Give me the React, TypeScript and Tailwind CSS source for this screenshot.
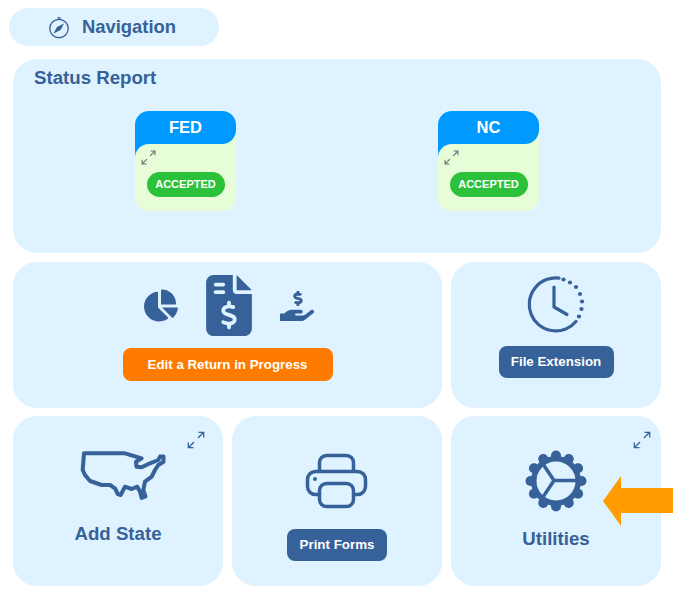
import type { JSX } from "react";
import { FaHandHoldingUsd } from "react-icons/fa";
import { FaChartPie, FaFileInvoiceDollar } from "react-icons/fa6";

const Expand = ({ className }: { className: string }) => (
  <svg viewBox="0 0 14 14" fill="none" stroke="currentColor" strokeWidth="1" className={className}>
    <path d="M8.5 5.5L13 1M9 1H13V5M5.5 8.5L1 13M1 9V13H5" />
  </svg>
);

const CompassIcon = () => (
  <svg viewBox="0 0 22 23" className="w-[22px] h-[23px]" fill="none" stroke="#366299" strokeWidth="1.3">
    <circle cx="11" cy="12.5" r="9.2" />
    <path d="M9.5 2H12.5" strokeWidth="1.6" />
    <path d="M16 7.5L12.6 14L5.5 17.5L9 11Z" fill="#366299" stroke="none" />
  </svg>
);

const ClockIcon = () => (
  <svg viewBox="0 0 60 60" className="w-[60px] h-[60px]" fill="none" stroke="#366299">
    <path d="M33 4.1A26.5 26.5 0 1 0 50 47.5" strokeWidth="3.2" strokeLinecap="round" />
    <path d="M28 13V33L41 40.5" strokeWidth="3.2" strokeLinecap="round" strokeLinejoin="round" />
    <g fill="#366299" stroke="none">
      <circle cx="37.5" cy="5.5" r="2.1" />
      <circle cx="44" cy="8.5" r="2.1" />
      <circle cx="50" cy="13" r="2.1" />
      <circle cx="54" cy="20" r="2.1" />
      <circle cx="56" cy="27.5" r="2.1" />
      <circle cx="55.5" cy="35" r="2.1" />
      <circle cx="53" cy="42.5" r="2.1" />
    </g>
  </svg>
);

const MapIcon = () => (
  <svg viewBox="0 0 88 54" className="w-[88px] h-[54px]" fill="none" stroke="#366299" strokeWidth="4" strokeLinejoin="round" strokeLinecap="round">
    <path d="M4 3.3H45L61.7 8.3L56 11.7L56.5 16.7L61.7 17.3L70 13.3L78.3 10L80 6.5L83.5 6.5L83.5 11.7L78.3 15L75 20L71.7 26.7L65 31.7L63.3 40L65.5 46.5L61.7 48L60 41.7L57.3 36.7L51.7 39L45 36.7L40.7 45L37.8 44L35 38.3L30 35L21.7 35L10 31L5 25L2.7 20Z" />
  </svg>
);

const PrinterIcon = () => (
  <svg viewBox="0 0 64 56" className="w-[64px] h-[56px]" fill="none" stroke="#366299" strokeWidth="3.5">
    <path d="M14.5 18.5V9.5A7 7 0 0 1 21.5 2.5H41.5A7 7 0 0 1 48.5 9.5V18.5" />
    <rect x="2.5" y="18.5" width="58" height="23" rx="8" />
    <rect x="14.5" y="30.5" width="34" height="23" rx="7" fill="#dff2ff" />
    <circle cx="10" cy="26" r="2" fill="#366299" stroke="none" />
  </svg>
);

const GearIcon = () => (
  <svg viewBox="0 0 62 62" className="w-[62px] h-[62px]">
    <g fill="#366299">
      {Array.from({ length: 12 }).map((_, i) => (
        <circle
          key={i}
          cx={31 + 25.5 * Math.cos((i * Math.PI) / 6)}
          cy={31 + 25.5 * Math.sin((i * Math.PI) / 6)}
          r="5"
        />
      ))}
    </g>
    <circle cx="31" cy="31" r="22.25" fill="none" stroke="#366299" strokeWidth="5.5" />
    <path d="M53 30.5H29L18 14M29 30.5L18 47" fill="none" stroke="#366299" strokeWidth="3.5" />
  </svg>
);

const ArrowIcon = () => (
  <svg viewBox="0 0 70 50" className="w-[70px] h-[50px]">
    <path d="M0 25L18 0V12H70V37H18V50Z" fill="#ff9d00" />
  </svg>
);

const ActionButton = ({ label, className }: { label: string; className: string }) => (
  <div className={`flex items-center justify-center text-white text-[13.33px] font-bold ${className}`}>
    {label}
  </div>
);

const StatusChip = ({ label }: { label: string }) => (
  <div className="relative w-[101px] h-[100px] rounded-[14px] overflow-hidden bg-[#e6fdd8] flex flex-col">
    <div className="h-[33px] bg-[#0099ff] rounded-br-[14px] flex items-center justify-center text-white text-[16.5px] font-bold">
      {label}
    </div>
    <div className="flex-1 bg-[linear-gradient(#0099ff_20px,#e6fdd8_20px)]">
      <div className="h-full bg-[#e6fdd8] rounded-tl-[14px] flex justify-center pt-[28px]">
        <div className="w-[78px] h-[25px] rounded-full bg-[#2cc13a] flex items-center justify-center text-white text-[11px] font-bold">
          ACCEPTED
        </div>
      </div>
    </div>
    <Expand className="absolute left-[6px] top-[39px] w-[15px] h-[15px] text-[#666f78]" />
  </div>
);

const BottomCard = ({ children }: { children: JSX.Element | JSX.Element[] }) => (
  <div className="relative h-[170px] rounded-[24px] bg-[#dff2ff] flex flex-col items-center">
    {children}
  </div>
);

const App = () => {
  return (
    <div className="w-[676px] h-[598px] bg-white pt-2 overflow-hidden font-['Liberation_Sans',sans-serif] text-[#366299]">
      <div className="ml-[9px] w-[210px] h-[38px] rounded-full bg-[#dff2ff] flex items-center pl-[39px] gap-[12px]">
        <CompassIcon />
        <span className="text-[18.4px] font-bold">Navigation</span>
      </div>

      <div className="ml-[13px] w-[648px] mt-[13px]">
        {/* Status Report */}
        <div className="h-[194px] rounded-[24px] bg-[#dff2ff] pt-2">
          <h2 className="pl-[21px] text-[18.67px] leading-[22px] font-bold">Status Report</h2>
          <div className="mt-[22px] flex justify-center gap-[202px]">
            <StatusChip label="FED" />
            <StatusChip label="NC" />
          </div>
        </div>

        {/* Returns and extension */}
        <div className="mt-[9px] grid grid-cols-[429px_210px] gap-[9px]">
          <div className="h-[146px] rounded-[24px] bg-[#dff2ff] pt-[13px] flex flex-col items-center">
            <div className="h-[61px] flex items-center gap-[28px] text-[#366299]">
              <FaChartPie className="w-[36px] h-[33px]" />
              <FaFileInvoiceDollar className="w-[46px] h-[61px]" />
              <FaHandHoldingUsd className="w-[34px] h-[32px]" />
            </div>
            <ActionButton label="Edit a Return in Progress" className="mt-3 w-[210px] h-[33px] rounded-lg bg-[#ff7b00]" />
          </div>
          <div className="h-[146px] rounded-[24px] bg-[#dff2ff] pt-[12px] flex flex-col items-center">
            <ClockIcon />
            <ActionButton label="File Extension" className="mt-3 w-[115px] h-[32px] rounded-lg bg-[#366299]" />
          </div>
        </div>

        <div className="mt-2 grid grid-cols-3 gap-[9px]">
          <BottomCard>
            <Expand className="absolute right-[18px] top-[15px] w-[18px] h-[18px]" />
            <div className="mt-[34px] ml-[12px]">
              <MapIcon />
            </div>
            <span className="mt-[19px] text-[18.67px] leading-[22px] font-bold">Add State</span>
          </BottomCard>
          <BottomCard>
            <div className="mt-[37px]">
              <PrinterIcon />
            </div>
            <ActionButton label="Print Forms" className="mt-[20px] w-[100px] h-[32px] rounded-lg bg-[#366299]" />
          </BottomCard>
          <BottomCard>
            <Expand className="absolute right-[10px] top-[15px] w-[18px] h-[18px]" />
            <div className="mt-[34px]">
              <GearIcon />
            </div>
            <span className="mt-[16px] text-[18.67px] leading-[22px] font-bold">Utilities</span>
            <div className="absolute right-[-12px] top-[60px]">
              <ArrowIcon />
            </div>
          </BottomCard>
        </div>
      </div>
    </div>
  );
};

export default App;
